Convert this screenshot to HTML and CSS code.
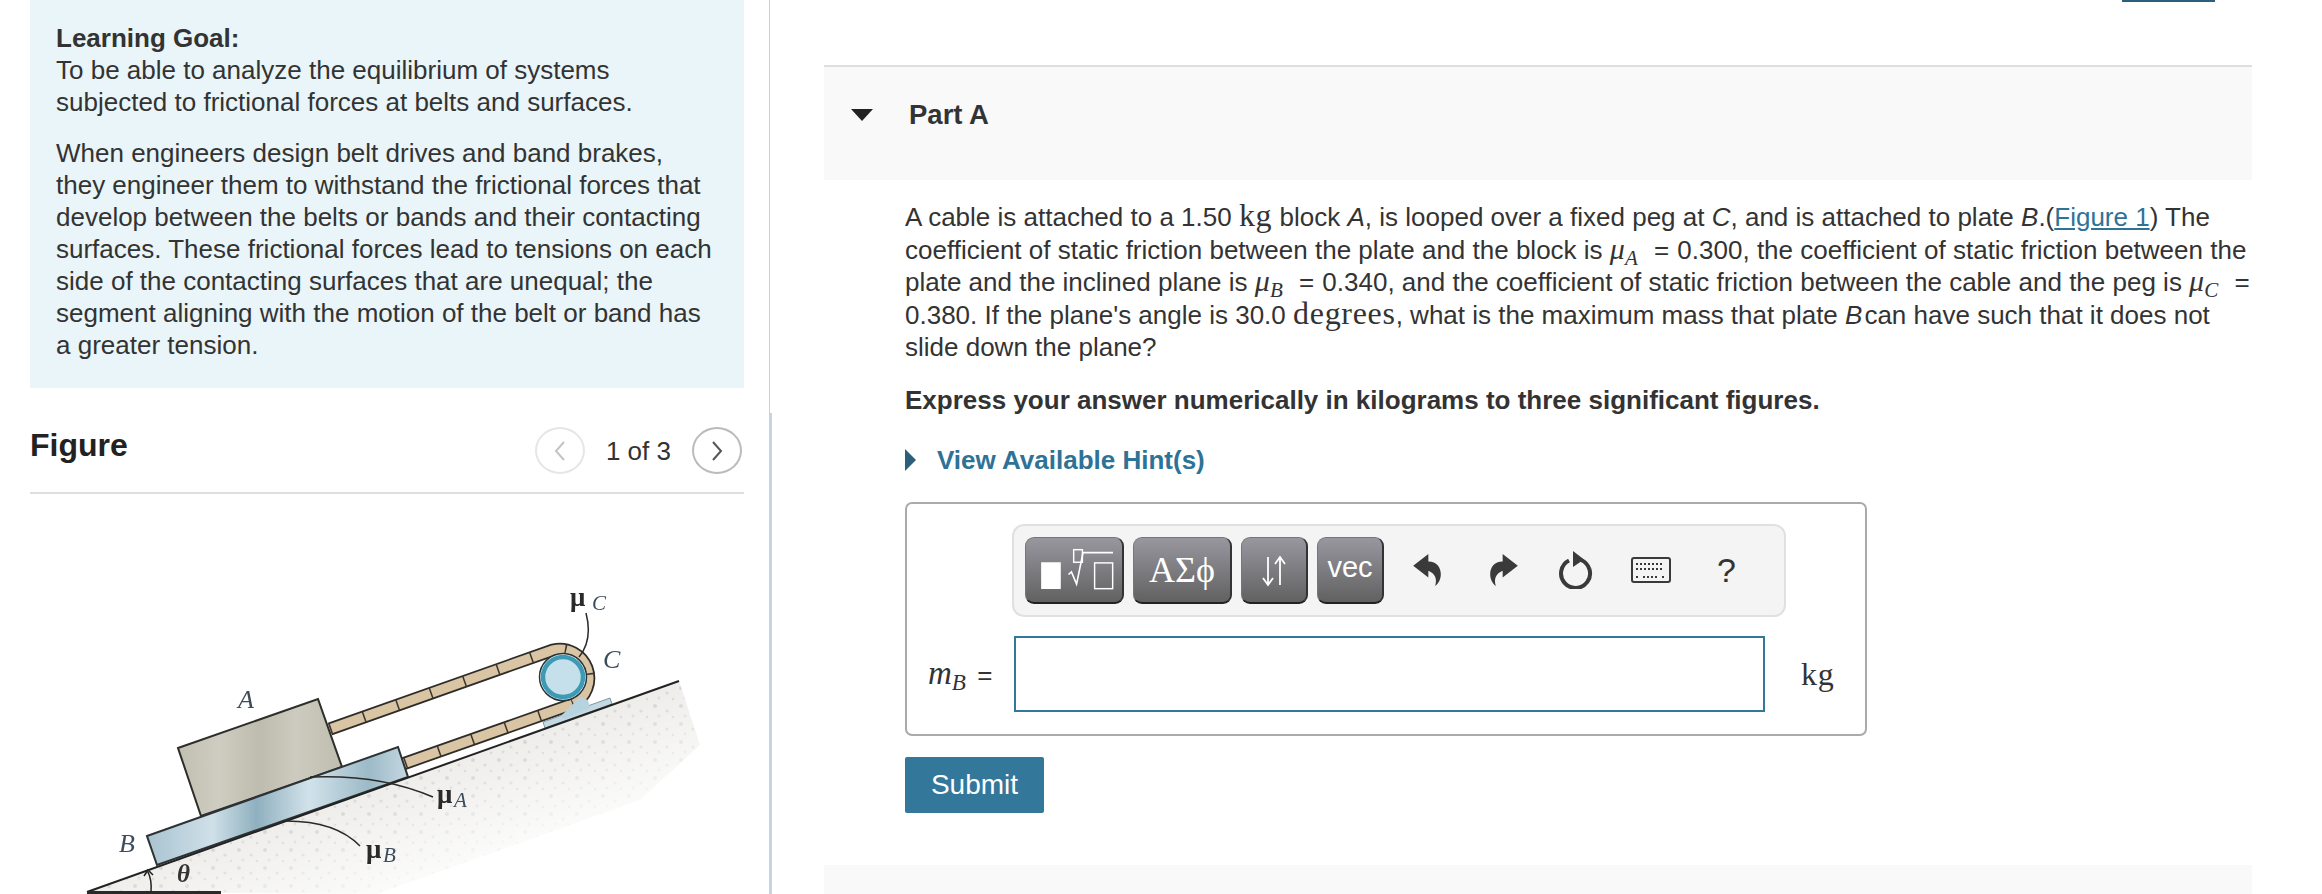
FILE: index.html
```html
<!DOCTYPE html>
<html lang="en">
<head>
<meta charset="utf-8">
<title>Part A</title>
<link rel="stylesheet" href="styles.css">
</head>
<body>
<main class="page">
  <section class="left">
    <div class="goal">
      <p><strong>Learning Goal:</strong><br>To be able to analyze the equilibrium of systems<br>subjected to frictional forces at belts and surfaces.</p>
      <p>When engineers design belt drives and band brakes,<br>they engineer them to withstand the frictional forces that<br>develop between the belts or bands and their contacting<br>surfaces. These frictional forces lead to tensions on each<br>side of the contacting surfaces that are unequal; the<br>segment aligning with the motion of the belt or band has<br>a greater tension.</p>
    </div>
    <div class="figure-head">
      <h2>Figure</h2>
      <div class="pager">
        <span class="circle off"><svg viewBox="0 0 14 24" width="14" height="24"><path d="M11 3 3 12l8 9" fill="none" stroke="#c4c4c4" stroke-width="2"/></svg></span>
        <span class="count">1 of 3</span>
        <span class="circle"><svg viewBox="0 0 14 24" width="14" height="24"><path d="M3 3l8 9-8 9" fill="none" stroke="#555" stroke-width="2"/></svg></span>
      </div>
    </div>
    <svg class="diagram" viewBox="30 494 714 400" width="714" height="400">
      <defs>
        <pattern id="dots" width="26" height="18" patternUnits="userSpaceOnUse">
          <rect width="26" height="18" fill="#ecebe8"/>
          <circle cx="5" cy="4" r="2" fill="#d0d0cc"/>
          <circle cx="17" cy="9" r="1.6" fill="#d3d3cf"/>
          <circle cx="9" cy="14" r="1.4" fill="#d6d6d2"/>
          <circle cx="23" cy="15" r="1.2" fill="#d3d3cf"/>
        </pattern>
        <linearGradient id="fade" gradientUnits="userSpaceOnUse" x1="440" y1="750" x2="485" y2="885">
          <stop offset="0" stop-color="#fff"/>
          <stop offset="1" stop-color="#000"/>
        </linearGradient>
        <mask id="fadeMask" maskUnits="userSpaceOnUse" x="30" y="600" width="714" height="300">
          <rect x="30" y="600" width="714" height="300" fill="url(#fade)"/>
        </mask>
        <linearGradient id="blockFill" x1="0" x2="1" y1="0" y2="0">
          <stop offset="0" stop-color="#c1bfb1"/><stop offset=".25" stop-color="#cfcdc1"/>
          <stop offset=".5" stop-color="#bebcae"/><stop offset=".72" stop-color="#cdcbbf"/>
          <stop offset="1" stop-color="#bfbdaf"/>
        </linearGradient>
        <linearGradient id="plateFill" x1="0" x2="1" y1="0" y2="0">
          <stop offset="0" stop-color="#a9c3d0"/><stop offset=".25" stop-color="#cfe0e8"/>
          <stop offset=".42" stop-color="#8fb0bf"/><stop offset=".62" stop-color="#d2e2ea"/>
          <stop offset=".85" stop-color="#9cbac8"/><stop offset="1" stop-color="#c5d8e1"/>
        </linearGradient>
      </defs>
      <polygon points="87,892 679,681 700,745 640,800 377,894" fill="url(#dots)" mask="url(#fadeMask)"/>
      <path d="M330 729 553 650A29 29 0 0 1 573 704L400 765" fill="none" stroke="#2e2c28" stroke-width="13"/>
      <path d="M330 729 553 650A29 29 0 0 1 573 704L400 765" fill="none" stroke="#d9c4a3" stroke-width="9.500"/>
      <path d="M330 729 553 650A29 29 0 0 1 573 704L400 765" fill="none" stroke="#3a362f" stroke-width="11" stroke-dasharray="1.500 34"/>
      <polygon points="543,722 610,698 612,704 545,728" fill="#c3d8e2" stroke="#7d97a3"/>
      <polygon points="561,716 580,697 588,700 590,708 564,719" fill="#b7d3df"/>
      <circle cx="563" cy="677" r="23.500" fill="#fff" stroke="#26343a" stroke-width="1.500"/>
      <circle cx="563" cy="677" r="20" fill="#c5e0ea" stroke="#3d9ab5" stroke-width="4.500"/>
      <polygon points="178,748 318,699 342,767 201,816" fill="url(#blockFill)" stroke="#2d2d2a" stroke-width="2"/>
      <polygon points="147,836 398,747 408,777 157,865" fill="url(#plateFill)" stroke="#2d3235" stroke-width="2"/>
      <path d="M87 892 679 681" stroke="#222" stroke-width="2" fill="none"/>
      <path d="M87 892.500H221" stroke="#2a2a2a" stroke-width="3" fill="none"/>
      <path d="M310 777Q380 774 433 797M282 821Q335 820 360 846M586 613Q593 640 579 657" stroke="#2a2a2a" stroke-width="1.500" fill="none"/>
      <path d="M151 892Q152 880 148 872M144 876 148 870 153 875" stroke="#222" stroke-width="1.500" fill="none"/>
      <text class="fig-label" x="238" y="708">A</text>
      <text class="fig-label" x="119" y="852">B</text>
      <text class="fig-label" x="603" y="668">C</text>
      <text class="fig-label theta" x="177" y="882">θ</text>
      <text class="fig-mu" x="437" y="803">μ</text><text class="fig-sub" x="454" y="807">A</text>
      <text class="fig-mu" x="366" y="858">μ</text><text class="fig-sub" x="383" y="862">B</text>
      <text class="fig-mu" x="570" y="606">μ</text><text class="fig-sub" x="592" y="610">C</text>
    </svg>
  </section>

  <div class="divider"><span class="divider-top"></span><span class="divider-bottom"></span></div>

  <section class="right">
    <div class="tab-row"><span class="tab-mark"></span></div>
    <header class="part-head">
      <span class="tri-down"></span>
      <h3>Part A</h3>
    </header>
    <div class="part-body">
      <p class="question">A cable is attached to a 1.50 <span class="unit">kg</span> block <i>A</i>, is looped over a fixed peg at <i>C</i>, and is attached to plate <i>B</i>.(<a href="#">Figure 1</a>) The<br>coefficient of static friction between the plate and the block is <span class="math"><i>μ<sub>A</sub></i></span> <span class="rel">=</span> 0.300, the coefficient of static friction between the<br>plate and the inclined plane is <span class="math"><i>μ<sub>B</sub></i></span> <span class="rel">=</span> 0.340, and the coefficient of static friction between the cable and the peg is <span class="math"><i>μ<sub>C</sub></i></span> <span class="rel end">=</span><br>0.380. If the plane's angle is 30.0 <span class="unit">degrees</span>, what is the maximum mass that plate <i class="tight">B</i>can have such that it does not<br>slide down the plane?</p>
      <p class="express">Express your answer numerically in kilograms to three significant figures.</p>
      <div class="hint"><span class="tri-right"></span><a href="#">View Available Hint(s)</a></div>

      <div class="answer">
        <div class="toolbar">
          <span class="key k1"><svg viewBox="75 52 298 201" width="96" height="65"><rect x="122" y="130" width="61" height="83" fill="#fff"/><rect x="223" y="91" width="27" height="39" fill="none" stroke="#fff" stroke-width="4.500"/><path d="M207 168 216 160 232 198 252 100H345" fill="none" stroke="#fff" stroke-width="5"/><rect x="288" y="132" width="56" height="80" fill="none" stroke="#fff" stroke-width="4.500"/></svg></span>
          <span class="key k1 greek">ΑΣϕ</span>
          <span class="key k2"><svg viewBox="0 0 30 44" width="30" height="44"><path d="M9 9V37M4 30 9 37 14 30M21 37V9M16 16 21 9 26 16" fill="none" stroke="#fff" stroke-width="1.800"/></svg></span>
          <span class="key k2 vec">vec</span>
          <span class="tools">
            <svg viewBox="0 0 82 95" width="28" height="32"><path d="M0 35 45 0V22C70 22 82 40 82 60 82 75 75 88 65 95 72 75 65 58 45 50V70Z" fill="#3a3a3a"/></svg>
            <svg viewBox="0 0 82 95" width="28" height="32"><path transform="matrix(-1 0 0 1 82 0)" d="M0 35 45 0V22C70 22 82 40 82 60 82 75 75 88 65 95 72 75 65 58 45 50V70Z" fill="#3a3a3a"/></svg>
            <svg viewBox="0 0 34 38" width="34" height="38"><path d="M10 9.500A14.500 14.500 0 1 0 22 9" fill="none" stroke="#3a3a3a" stroke-width="4"/><polygon points="14,0 25,8.500 14,16" fill="#3a3a3a"/></svg>
            <svg viewBox="0 0 40 26" width="40" height="26"><rect x="1" y="1" width="38" height="24" rx="2" fill="none" stroke="#3a3a3a" stroke-width="2"/><path d="M5 7H33M5 12H33M5 20H8M12 20H27M31 20H35" stroke="#3a3a3a" stroke-width="2.200" stroke-dasharray="2 2" fill="none"/></svg>
            <span class="help">?</span>
          </span>
        </div>
        <div class="entry">
          <span class="lhs"><i>m<sub>B</sub></i> <span class="eq">=</span></span>
          <span class="field"></span>
          <span class="unit rhs">kg</span>
        </div>
      </div>
      <button class="submit" type="button">Submit</button>
    </div>
    <div class="next-part"></div>
  </section>
</main>
</body>
</html>
```

FILE: styles.css
```css
html, body {
  margin: 0;
  height: 894px;
  overflow: hidden;
  background: #fff;
}
body {
  font-family: "Liberation Sans", Arial, sans-serif;
  font-size: 26px;
  line-height: 32px;
  color: #333;
}
p, h2, h3 { margin: 0; }

.page {
  display: flex;
  height: 894px;
  width: 2322px;
}

/* left column */
.left {
  width: 714px;
  margin-left: 30px;
  margin-right: 25px;
  flex: none;
}
.goal {
  background: #e9f5f8;
  padding: 22px 27px 27px 26px;
}
.goal p + p { margin-top: 19px; }
.goal strong { font-weight: 700; }

.figure-head {
  display: flex;
  justify-content: space-between;
  align-items: center;
  height: 106px;
  box-sizing: border-box;
  border-bottom: 2px solid #dedede;
}
.figure-head h2 {
  font-size: 32px;
  line-height: 40px;
  font-weight: 700;
  color: #222;
  margin-top: 10px;
}
.pager {
  display: flex;
  align-items: center;
  gap: 21px;
  margin-top: 21px;
  margin-right: 2px;
}
.circle {
  width: 50px;
  height: 47px;
  box-sizing: border-box;
  border: 2px solid #bbb;
  border-radius: 50%;
  display: flex;
  align-items: center;
  justify-content: center;
}
.circle.off { border-color: #e6e6e6; }
.count { font-size: 26px; color: #333; }

.diagram {
  display: block;
  filter: blur(.4px);
}
.fig-label {
  font-family: "Liberation Serif", serif;
  font-style: italic;
  font-size: 26px;
  fill: #3e4d5c;
}
.fig-label.theta { fill: #333; font-size: 25px; font-weight: 700; }
.fig-mu {
  font-family: "Liberation Serif", serif;
  font-weight: 700;
  font-size: 27px;
  fill: #2a2a2a;
}
.fig-sub {
  font-family: "Liberation Serif", serif;
  font-style: italic;
  font-size: 21px;
  fill: #3e4d5c;
}

/* divider between columns */
.divider {
  width: 3px;
  flex: none;
  display: flex;
  flex-direction: column;
}
.divider-top {
  height: 413px;
  width: 1px;
  background: #c6d4e2;
}
.divider-bottom {
  flex: 1;
  background: #c6d4e2;
}

/* right column */
.right {
  flex: none;
  width: 1428px;
  margin-left: 52px;
}
.tab-row {
  display: flex;
  justify-content: flex-end;
  padding-right: 37px;
  height: 2px;
}
.tab-mark {
  width: 93px;
  height: 2px;
  background: #2b5f7a;
}
.part-head {
  margin-top: 63px;
  height: 115px;
  box-sizing: border-box;
  border-top: 2px solid #dedede;
  background: #f9f9f9;
  display: flex;
  align-items: center;
  padding: 0 0 18px 27px;
}
.part-head h3 {
  font-size: 27.500px;
  line-height: 32px;
  font-weight: 700;
  margin-left: 36px;
  color: #333;
}
.tri-down {
  width: 0;
  height: 0;
  border-left: 11px solid transparent;
  border-right: 11px solid transparent;
  border-top: 12px solid #222;
}
.part-body {
  padding: 21px 0 0 81px;
}
.question {
  font-size: 26px;
  line-height: 32.500px;
  white-space: nowrap;
}
.question a, .hint a {
  color: #2e7396;
}
.question a { text-decoration: underline; }
.unit {
  font-family: "Liberation Serif", serif;
  font-size: 32px;
  letter-spacing: .7px;
  line-height: 0;
}
.math {
  font-family: "Liberation Serif", serif;
  font-size: 30px;
  line-height: 0;
  margin-right: 9px;
}
.rel { margin-right: 1px; }
.rel.end { margin-right: 0; }
.tight { margin-right: 2px; }
sub {
  font-size: 70%;
  line-height: 0;
  vertical-align: -6px;
}
.express {
  font-weight: 700;
  font-size: 26px;
  margin-top: 20px;
}
.hint {
  display: flex;
  align-items: center;
  margin-top: 28px;
  height: 32px;
}
.hint a {
  font-weight: 700;
  text-decoration: none;
  margin-left: 21px;
  font-size: 26px;
}
.tri-right {
  width: 0;
  height: 0;
  border-top: 11px solid transparent;
  border-bottom: 11px solid transparent;
  border-left: 11px solid #2b5f7a;
}

/* answer box */
.answer {
  margin-top: 26px;
  width: 962px;
  height: 234px;
  box-sizing: border-box;
  border: 2px solid #aaa;
  border-radius: 7px;
  padding: 20px 0 0 105px;
}
.toolbar {
  width: 774px;
  height: 93px;
  box-sizing: border-box;
  border: 2px solid #e0e0e0;
  border-radius: 12px;
  background: #f4f4f4;
  display: flex;
  align-items: center;
  padding: 0 0 0 11px;
  gap: 9px;
}
.key {
  height: 67px;
  box-sizing: border-box;
  border: 1px solid #77767c;
  border-right: 2px solid #333;
  border-bottom: 2px solid #222;
  border-radius: 9px;
  background: linear-gradient(#98979f, #616161);
  display: flex;
  align-items: center;
  justify-content: center;
  color: #fff;
}
.k1 { width: 99px; }
.k2 { width: 67px; }
.greek {
  font-family: "Liberation Serif", serif;
  font-size: 36px;
}
.vec {
  font-size: 29px;
  padding-bottom: 5px;
}
.tools {
  display: flex;
  align-items: center;
  margin-left: 20px;
}
.tools svg:nth-child(1) { margin-right: 49px; }
.tools svg:nth-child(2) { margin-right: 41px; }
.tools svg:nth-child(3) { margin-right: 38px; }
.tools svg:nth-child(4) { margin-right: 46px; }
.help { font-size: 34px; color: #333; }

.entry {
  display: flex;
  align-items: center;
  margin-top: 19px;
  margin-left: 2px;
}
.lhs {
  margin-left: -86px;
  width: 86px;
  font-family: "Liberation Serif", serif;
  font-size: 33px;
  white-space: nowrap;
}
.eq { font-family: "Liberation Sans", sans-serif; font-size: 26px; margin-left: 3px; }
.field {
  width: 751px;
  height: 76px;
  box-sizing: border-box;
  border: 2px solid #33779a;
  background: #fff;
}
.rhs { margin-left: 36px; }

.submit {
  display: block;
  margin-top: 21px;
  width: 139px;
  height: 56px;
  border: 0;
  border-radius: 2px;
  background: #33779a;
  color: #fff;
  font-family: "Liberation Sans", sans-serif;
  font-size: 28px;
  padding: 0;
}
.next-part {
  margin-top: 52px;
  height: 40px;
  background: #f9f9f9;
}
```
